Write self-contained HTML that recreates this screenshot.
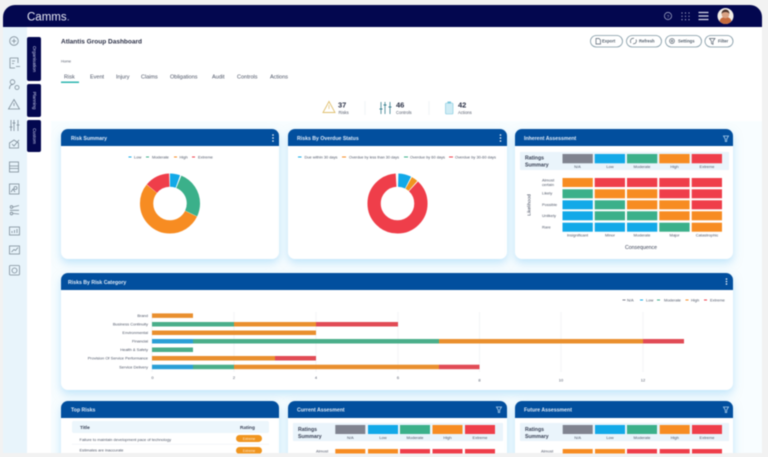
<!DOCTYPE html>
<html lang="en"><head><meta charset="utf-8"><title>Camms Dashboard</title>
<style>
html,body{margin:0;padding:0;background:#f2f2f2}
#r{position:relative;width:768px;height:457px;overflow:hidden;background:#f2f2f2;font-family:"Liberation Sans",sans-serif;filter:blur(.45px)}
#r div{position:absolute}
.card{background:#fff;border-radius:7px;box-shadow:0 4px 9px rgba(135,205,245,.5)}
.hd{left:0;right:0;top:0;height:17px;background:#024f9e;border-radius:7px 7px 0 0}
svg{position:absolute;left:0;top:0}
text{font-family:"Liberation Sans",sans-serif}
.t{font-size:5.2px;font-weight:700;fill:#dfeaf7}
.l{font-size:4px;fill:#4d5566}
.c{font-size:4px;fill:#4d5566;text-anchor:middle}
.b{font-size:5.2px;font-weight:700;fill:#3a4256}
.bt{font-size:4.2px;font-weight:700;fill:#55626f}
.g{fill:#80838f}.bl{fill:#12a9e8}.gr{fill:#3bb08a}.o{fill:#f78c22}.re{fill:#ef3e4a}
.ic{fill:none;stroke:#7d8c98;stroke-width:.8}
.dk{fill:none;stroke:#55626f;stroke-width:.7}
.pi{fill:#f0951f}
</style></head><body>
<div id="r">
<div style="left:3px;top:5px;width:759px;height:448px;background:#f8fdff;border-radius:12px 12px 0 0"></div>
<div style="left:27px;top:27px;width:24px;height:426px;background:#fff"></div>
<div style="left:3px;top:27px;width:24px;height:426px;background:#e8f4fb"></div>
<div style="left:27px;top:27px;width:735px;height:94px;background:#fff"></div>
<div style="left:3px;top:5px;width:759px;height:22px;background:#03074f;border-radius:12px 12px 0 0"></div>
<div style="left:27px;top:37px;width:14px;height:44px;background:#03074f;border-radius:2px"></div>
<div style="left:27px;top:84px;width:14px;height:33px;background:#03074f;border-radius:2px"></div>
<div style="left:27px;top:120px;width:14px;height:32px;background:#03074f;border-radius:2px"></div>

<div class="card" style="left:61px;top:129px;width:218px;height:130px"><div class="hd"></div></div>
<div class="card" style="left:288px;top:129px;width:219px;height:130px"><div class="hd"></div></div>
<div class="card" style="left:515px;top:129px;width:218px;height:130px"><div class="hd"></div></div>
<div class="card" style="left:61px;top:273px;width:672px;height:117px"><div class="hd"></div></div>
<div class="card" style="left:61px;top:401px;width:218px;height:70px"><div class="hd"></div></div>
<div class="card" style="left:288px;top:401px;width:219px;height:70px"><div class="hd"></div></div>
<div class="card" style="left:515px;top:401px;width:218px;height:70px"><div class="hd"></div></div>
<div style="left:0;top:453px;width:768px;height:4px;background:#f2f2f2"></div>

<svg width="768" height="457" viewBox="0 0 768 457">
<!-- header -->
<text x="27" y="20.500" font-size="11.500" fill="#e8eaf5">Camms<tspan fill="#8f94b5">.</tspan></text>
<circle cx="668" cy="16" r="3.600" fill="none" stroke="#aeb3cf" stroke-width=".7"/><text x="668" y="17.800" font-size="4.600" fill="#aeb3cf" text-anchor="middle">?</text>
<g fill="#aeb3cf"><circle cx="682" cy="13" r=".6"/><circle cx="685.500" cy="13" r=".6"/><circle cx="689" cy="13" r=".6"/><circle cx="682" cy="16.300" r=".6"/><circle cx="685.500" cy="16.300" r=".6"/><circle cx="689" cy="16.300" r=".6"/><circle cx="682" cy="19.600" r=".6"/><circle cx="685.500" cy="19.600" r=".6"/><circle cx="689" cy="19.600" r=".6"/></g>
<path d="M698.500 12.500h10M698.500 16h10M698.500 19.500h10" stroke="#d8dbe9" stroke-width="1.300"/>
<circle cx="725.500" cy="16" r="8" fill="#f4efe9"/><path d="M719.500 21c1-3 3-4 6-4s5 1 6 4c-1.500 2-3.500 3-6 3s-4.500-1-6-3z" fill="#c56a3c"/><circle cx="725.500" cy="14.500" r="3.800" fill="#d9a283"/><path d="M721.500 14c0-3 2-4.500 4-4.500s4 1.500 4 4.500c-1-1.500-2-2-4-2s-3 .5-4 2z" fill="#4b3228"/>

<!-- side icons -->
<circle cx="14" cy="41" r="4.300" class="ic"/><path d="M11.800 41h4.400M14 38.800v4.400" class="ic"/>
<path d="M10 58h8v5M10 58v10h5M12 61h3M12 63.500h2M16 66.500h4" class="ic"/>
<circle cx="12.500" cy="82" r="2.300" class="ic"/><path d="M9.500 89c0-3 1.500-4.500 3.500-4.500M15 87.500a2 2 0 1 0 4 0a2 2 0 1 0-4 0" class="ic"/>
<path d="M14 99.500l5.500 9.500h-11zM14 103v3" class="ic"/>
<path d="M11 120v11M14 120v11M18 120v11" class="ic"/><path d="M9.500 127h3M12.500 123h3M16.500 125h3" class="ic"/>
<path d="M9.500 143l4.500-3 4.500 3v5h-9zM12 144l2 2 5-6" class="ic"/>
<rect x="9.500" y="162" width="9" height="10" class="ic"/><path d="M9.500 166h9M9.500 168.500h9" class="ic"/>
<rect x="9.500" y="184" width="9.500" height="10" class="ic"/><circle cx="15.500" cy="188" r="1.500" class="ic"/><path d="M11 192l2-3 2 3" class="ic"/>
<circle cx="11.500" cy="207" r="1.300" class="ic"/><circle cx="11.500" cy="213.500" r="1.300" class="ic"/><path d="M13 207l6-1.500M13 213.500l6 .5M10 210.300h9" class="ic"/>
<rect x="9.500" y="227" width="10" height="8" class="ic"/><path d="M12 233v-2M14.500 233v-3M17 233v-4" class="ic"/>
<rect x="9.500" y="246" width="10" height="8" class="ic"/><path d="M11.500 252l2.500-2.500 1.500 1 2.500-3" class="ic"/>
<rect x="9.500" y="265.500" width="10" height="9.500" rx="1" class="ic"/><circle cx="14.500" cy="270.500" r="2.500" class="ic"/>

<text transform="translate(32.800,59) rotate(90)" font-size="4.600" fill="#d0d5f0" text-anchor="middle">Organisation</text>
<text transform="translate(32.800,100.500) rotate(90)" font-size="4.600" fill="#d0d5f0" text-anchor="middle">Planning</text>
<text transform="translate(32.800,136) rotate(90)" font-size="4.600" fill="#d0d5f0" text-anchor="middle">Custom</text>

<!-- title -->
<text x="61" y="43.500" font-size="6" font-weight="700" fill="#2b3046" textLength="81" lengthAdjust="spacingAndGlyphs">Atlantis Group Dashboard</text>
<text x="61" y="62.500" font-size="3.800" fill="#555c6c">Home</text>
<g font-size="5.500" fill="#4a5264">
<text x="64" y="78.500">Risk</text><text x="90" y="78.500">Event</text><text x="116" y="78.500">Injury</text><text x="141" y="78.500">Claims</text><text x="170" y="78.500">Obligations</text><text x="212" y="78.500">Audit</text><text x="237" y="78.500">Controls</text><text x="270" y="78.500">Actions</text>
</g>
<rect x="61" y="81.500" width="18" height="1.500" fill="#2db5b0"/>

<!-- buttons -->
<g fill="none" stroke="#7f97a3" stroke-width=".8">
<rect x="590.500" y="35.500" width="32" height="11.500" rx="5.700"/><rect x="626.500" y="35.500" width="35" height="11.500" rx="5.700"/><rect x="665.500" y="35.500" width="36" height="11.500" rx="5.700"/><rect x="705" y="35.500" width="28" height="11.500" rx="5.700"/>
</g>
<path d="M596 38.500h3l1.500 1.500v4h-4.500z" class="dk"/><text x="602" y="42.700" class="bt">Export</text>
<path d="M631 43a3 3 0 0 1 1-4.500l2-.3M636 39.500a3 3 0 0 1-1 4l-2 .3" class="dk"/><text x="639" y="42.700" class="bt">Refresh</text>
<circle cx="672" cy="41" r="2.400" class="dk"/><circle cx="672" cy="41" r=".8" class="dk"/><text x="678" y="42.700" class="bt">Settings</text>
<path d="M709.500 38.500h5.500l-2 2.800v3l-1.500-.8v-2.200z" class="dk"/><text x="718" y="42.700" class="bt">Filter</text>

<!-- stats -->
<path d="M329 101.500l6 11h-12z" fill="none" stroke="#e0c070" stroke-width=".9"/><path d="M329 105v4" stroke="#e0c070" stroke-width=".7"/>
<text x="338" y="107.500" font-size="7.500" font-weight="700" fill="#2d3348">37</text><text x="338.500" y="114" font-size="4.200" fill="#555c6c">Risks</text>
<path d="M381 102v12M385 102v12M390 102v12" stroke="#3a8090" stroke-width=".8"/><path d="M379.500 109h3M383.500 105h3M388.500 107h3" stroke="#3a8090" stroke-width=".9"/>
<text x="396" y="107.500" font-size="7.500" font-weight="700" fill="#2d3348">46</text><text x="396" y="114" font-size="4.200" fill="#555c6c">Controls</text>
<rect x="445.500" y="103" width="7.500" height="11" rx="1" fill="#cfecf5" stroke="#7cc6dc" stroke-width=".6"/><rect x="447.500" y="101.500" width="3.500" height="2" fill="#7cc6dc"/>
<text x="458" y="107.500" font-size="7.500" font-weight="700" fill="#2d3348">42</text><text x="458" y="114" font-size="4.200" fill="#555c6c">Actions</text>
<path d="M365 101v14M429 101v14" stroke="#eef2f5" stroke-width=".8"/>

<!-- card titles -->
<text x="71" y="140" class="t">Risk Summary</text>
<text x="297" y="140" class="t">Risks By Overdue Status</text>
<text x="524" y="140" class="t">Inherent Assessment</text>
<text x="68" y="284" class="t">Risks By Risk Category</text>
<text x="71" y="411.500" class="t">Top Risks</text>
<text x="297" y="411.500" class="t">Current Assesment</text>
<text x="524" y="411.500" class="t">Future Assessment</text>
<g fill="#fff"><circle cx="273" cy="135" r=".8"/><circle cx="273" cy="138" r=".8"/><circle cx="273" cy="141" r=".8"/><circle cx="500.500" cy="135" r=".8"/><circle cx="500.500" cy="138" r=".8"/><circle cx="500.500" cy="141" r=".8"/><circle cx="726.500" cy="279" r=".8"/><circle cx="726.500" cy="281.500" r=".8"/><circle cx="726.500" cy="284" r=".8"/></g>
<path d="M723.500 136h5l-1.800 3v2.500h-1.400v-2.500zM496.500 407h5l-1.800 3v2.500h-1.400v-2.500zM723.500 407h5l-1.800 3v2.500h-1.400v-2.500z" fill="none" stroke="#a9cdec" stroke-width=".8"/>

<!-- donut 1 legend -->
<path d="M128.500 157h3" stroke="#12a9e8"/><text x="134" y="158.500" class="l">Low</text>
<path d="M146 157h3" stroke="#3bb08a"/><text x="152" y="158.500" class="l">Moderate</text>
<path d="M174 157h3" stroke="#f78c22"/><text x="179.500" y="158.500" class="l">High</text>
<path d="M192 157h3" stroke="#ef3e4a"/><text x="198" y="158.500" class="l">Extreme</text>
<!-- donut 1 -->
<g transform="rotate(-90 170 203.500)" fill="none" stroke-width="13.300">
<circle cx="170" cy="203.500" r="23.400" pathLength="100" stroke="#12a9e8" stroke-dasharray="5.500 100" stroke-dashoffset="0"/>
<circle cx="170" cy="203.500" r="23.400" pathLength="100" stroke="#3bb08a" stroke-dasharray="26 100" stroke-dashoffset="-6.200"/>
<circle cx="170" cy="203.500" r="23.400" pathLength="100" stroke="#f78c22" stroke-dasharray="53.800 100" stroke-dashoffset="-32.400"/>
<circle cx="170" cy="203.500" r="23.400" pathLength="100" stroke="#ef3e4a" stroke-dasharray="13.600 100" stroke-dashoffset="-86.400"/>
</g>
<!-- donut 2 legend -->
<path d="M298 157h3.500" stroke="#12a9e8"/><text x="304.500" y="158.500" class="l" textLength="33" lengthAdjust="spacingAndGlyphs">Due within 30 days</text>
<path d="M342 157h4" stroke="#f78c22"/><text x="349" y="158.500" class="l" textLength="50" lengthAdjust="spacingAndGlyphs">Overdue by less than 30 days</text>
<path d="M404 157h4" stroke="#3bb08a"/><text x="410" y="158.500" class="l" textLength="35" lengthAdjust="spacingAndGlyphs">Overdue by 60 days</text>
<path d="M449 157h4" stroke="#ef3e4a"/><text x="455" y="158.500" class="l" textLength="41" lengthAdjust="spacingAndGlyphs">Overdue by 30-60 days</text>
<g transform="rotate(-90 397.500 203.500)" fill="none" stroke-width="13.300">
<circle cx="397.500" cy="203.500" r="23.400" pathLength="100" stroke="#12a9e8" stroke-dasharray="7 100" stroke-dashoffset="-.5"/>
<circle cx="397.500" cy="203.500" r="23.400" pathLength="100" stroke="#f0951f" stroke-dasharray="3.500 100" stroke-dashoffset="-8"/>
<circle cx="397.500" cy="203.500" r="23.400" pathLength="100" stroke="#ef3e4a" stroke-dasharray="87.500 100" stroke-dashoffset="-12"/>
</g>

<!-- Inherent -->
<rect x="520" y="152" width="209" height="18" fill="#eaf4fb"/>
<text x="525" y="159.500" class="b">Ratings</text><text x="525" y="166.500" class="b">Summary</text>
<g transform="translate(0,154)">
<rect class="g" x="562.500" width="30.300" height="9.300"/><rect class="bl" x="594.700" width="30.300" height="9.300"/><rect class="gr" x="627" width="30.300" height="9.300"/><rect class="o" x="659.300" width="30.300" height="9.300"/><rect class="re" x="691.700" width="30.300" height="9.300"/>
</g>
<text x="577.500" y="168" class="c">N/A</text><text x="610" y="168" class="c">Low</text><text x="642" y="168" class="c">Moderate</text><text x="674.500" y="168" class="c">High</text><text x="707" y="168" class="c">Extreme</text>
<g>
<rect class="o" x="562.500" y="178" width="30.300" height="9"/><rect class="re" x="594.700" y="178" width="30.300" height="9"/><rect class="re" x="627" y="178" width="30.300" height="9"/><rect class="re" x="659.300" y="178" width="30.300" height="9"/><rect class="re" x="691.700" y="178" width="30.300" height="9"/>
<rect class="gr" x="562.500" y="189.300" width="30.300" height="9"/><rect class="o" x="594.700" y="189.300" width="30.300" height="9"/><rect class="o" x="627" y="189.300" width="30.300" height="9"/><rect class="re" x="659.300" y="189.300" width="30.300" height="9"/><rect class="re" x="691.700" y="189.300" width="30.300" height="9"/>
<rect class="bl" x="562.500" y="200.300" width="30.300" height="9"/><rect class="gr" x="594.700" y="200.300" width="30.300" height="9"/><rect class="o" x="627" y="200.300" width="30.300" height="9"/><rect class="o" x="659.300" y="200.300" width="30.300" height="9"/><rect class="re" x="691.700" y="200.300" width="30.300" height="9"/>
<rect class="bl" x="562.500" y="211.300" width="30.300" height="9"/><rect class="gr" x="594.700" y="211.300" width="30.300" height="9"/><rect class="gr" x="627" y="211.300" width="30.300" height="9"/><rect class="o" x="659.300" y="211.300" width="30.300" height="9"/><rect class="o" x="691.700" y="211.300" width="30.300" height="9"/>
<rect class="bl" x="562.500" y="222.700" width="30.300" height="9"/><rect class="bl" x="594.700" y="222.700" width="30.300" height="9"/><rect class="bl" x="627" y="222.700" width="30.300" height="9"/><rect class="gr" x="659.300" y="222.700" width="30.300" height="9"/><rect class="o" x="691.700" y="222.700" width="30.300" height="9"/>
</g>
<text x="542" y="181.500" class="l">Almost</text><text x="542" y="186" class="l">certain</text>
<text x="542" y="194.500" class="l">Likely</text><text x="542" y="206" class="l">Possible</text><text x="542" y="217" class="l">Unlikely</text><text x="542" y="228.500" class="l">Rare</text>
<text transform="translate(530.500,205) rotate(-90)" font-size="4.800" fill="#3d4558" text-anchor="middle">Likelihood</text>
<text x="577.500" y="236.500" class="c">Insignificant</text><text x="610" y="236.500" class="c">Minor</text><text x="642" y="236.500" class="c">Moderate</text><text x="674.500" y="236.500" class="c">Major</text><text x="707" y="236.500" class="c">Catastrophic</text>
<text x="641" y="249" font-size="5.200" fill="#3d4558" text-anchor="middle">Consequence</text>

<!-- Bars -->
<g stroke="#eceff2" stroke-width=".6"><path d="M152 312v60M234 312v60M316 312v60M398 312v60M479.500 312v60M561 312v60M643 312v60"/></g>
<g font-size="4" fill="#4d5566" text-anchor="end">
<text x="148" y="317">Brand</text><text x="148" y="325.700">Business Continuity</text><text x="148" y="334">Environmental</text><text x="148" y="342.700">Financial</text><text x="148" y="351">Health &amp; Safety</text><text x="148" y="359.700">Provision Of Service Performance</text><text x="148" y="368.300">Service Delivery</text>
</g>
<g>
<rect x="152" y="313.400" width="41" height="4.500" fill="#e98f2e"/>
<rect x="152" y="322" width="82" height="4.500" fill="#4aae8a"/><rect x="234" y="322" width="82" height="4.500" fill="#e98f2e"/><rect x="316" y="322" width="82" height="4.500" fill="#e14b55"/>
<rect x="152" y="330.500" width="164" height="4.500" fill="#e98f2e"/>
<rect x="152" y="339" width="41" height="4.500" fill="#2a9fd6"/><rect x="193" y="339" width="246" height="4.500" fill="#4aae8a"/><rect x="439" y="339" width="204" height="4.500" fill="#e98f2e"/><rect x="643" y="339" width="41" height="4.500" fill="#e14b55"/>
<rect x="152" y="347.500" width="41" height="4.500" fill="#4aae8a"/>
<rect x="152" y="356" width="123" height="4.500" fill="#e98f2e"/><rect x="275" y="356" width="41" height="4.500" fill="#e14b55"/>
<rect x="152" y="364.700" width="41" height="4.500" fill="#2a9fd6"/><rect x="193" y="364.700" width="41" height="4.500" fill="#4aae8a"/><rect x="234" y="364.700" width="205" height="4.500" fill="#e98f2e"/><rect x="439" y="364.700" width="40.500" height="4.500" fill="#e14b55"/>
</g>
<text x="152.500" y="379" class="c">0</text><text x="234" y="379" class="c">2</text><text x="316" y="379" class="c">4</text><text x="398" y="379" class="c">6</text><text x="479.500" y="381.500" class="c">8</text><text x="561" y="381.500" class="c">10</text><text x="643" y="381.500" class="c">12</text>
<path d="M622.500 300h3" stroke="#80838f"/><text x="627" y="301.500" class="l">N/A</text>
<path d="M640 300h3" stroke="#12a9e8"/><text x="646" y="301.500" class="l">Low</text>
<path d="M657 300h3" stroke="#3bb08a"/><text x="664" y="301.500" class="l">Moderate</text>
<path d="M685.500 300h3" stroke="#f78c22"/><text x="691" y="301.500" class="l">High</text>
<path d="M704 300h3" stroke="#ef3e4a"/><text x="710" y="301.500" class="l">Extreme</text>

<!-- Top risks -->
<rect x="72" y="421" width="197" height="12" rx="2" fill="#ecf6fc"/>
<text x="80" y="429" font-size="4.800" font-weight="700" fill="#3a4256">Title</text><text x="240" y="429" font-size="4.800" font-weight="700" fill="#3a4256">Rating</text>
<text x="79.500" y="441" font-size="4" fill="#4d5566">Failure to maintain development pace of technology</text>
<text x="79.500" y="451.500" font-size="4" fill="#4d5566">Estimates are inaccurate</text>
<path d="M72 444.200h197" stroke="#e9eef2" stroke-width=".5"/>
<rect x="236" y="435" width="26" height="7" rx="3.500" class="pi"/><rect x="236" y="447" width="26" height="7" rx="3.500" class="pi"/>
<text x="249" y="439.800" font-size="3.400" fill="#ffe6c4" text-anchor="middle">Extreme</text><text x="249" y="451.800" font-size="3.400" fill="#ffe6c4" text-anchor="middle">Extreme</text>

<!-- Current -->
<rect x="293" y="423" width="210" height="18" fill="#eaf4fb"/>
<text x="298" y="431" class="b">Ratings</text><text x="298" y="438" class="b">Summary</text>
<g>
<rect class="g" x="335.300" y="425" width="30" height="9"/><rect class="bl" x="368" y="425" width="30" height="9"/><rect class="gr" x="400" y="425" width="30" height="9"/><rect class="o" x="432.500" y="425" width="30" height="9"/><rect class="re" x="465" y="425" width="30" height="9"/>
<rect class="o" x="335.300" y="449" width="30" height="5"/><rect class="o" x="368" y="449" width="30" height="5"/><rect class="re" x="400" y="449" width="30" height="5"/><rect class="re" x="432.500" y="449" width="30" height="5"/><rect class="re" x="465" y="449" width="30" height="5"/>
</g>
<text x="350.300" y="439" class="c">N/A</text><text x="383" y="439" class="c">Low</text><text x="415" y="439" class="c">Moderate</text><text x="447.500" y="439" class="c">High</text><text x="480" y="439" class="c">Extreme</text>
<text x="316" y="452.500" class="l">Almost</text>

<!-- Future -->
<rect x="520" y="423" width="209" height="18" fill="#eaf4fb"/>
<text x="525" y="431" class="b">Ratings</text><text x="525" y="438" class="b">Summary</text>
<g>
<rect class="g" x="562.700" y="425" width="30" height="9"/><rect class="bl" x="595" y="425" width="30" height="9"/><rect class="gr" x="627" y="425" width="30" height="9"/><rect class="o" x="659.700" y="425" width="30" height="9"/><rect class="re" x="692" y="425" width="30" height="9"/>
<rect class="o" x="562.700" y="449" width="30" height="5"/><rect class="o" x="595" y="449" width="30" height="5"/><rect class="re" x="627" y="449" width="30" height="5"/><rect class="re" x="659.700" y="449" width="30" height="5"/><rect class="re" x="692" y="449" width="30" height="5"/>
</g>
<text x="577.700" y="439" class="c">N/A</text><text x="610" y="439" class="c">Low</text><text x="642" y="439" class="c">Moderate</text><text x="674.700" y="439" class="c">High</text><text x="707" y="439" class="c">Extreme</text>
<text x="541" y="452.500" class="l">Almost</text>
<rect x="0" y="453.500" width="768" height="4" fill="#f2f2f2"/>
</svg>
</div>
</body></html>
